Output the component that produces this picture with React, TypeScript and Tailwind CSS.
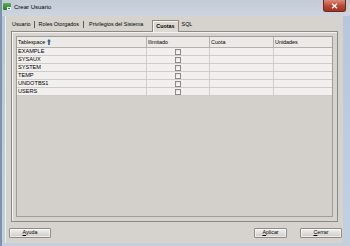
import React from "react";

const rows = ["EXAMPLE", "SYSAUX", "SYSTEM", "TEMP", "UNDOTBS1", "USERS"];

function Btn({ label, w }: { label: string; w: string }) {
  return (
    <div
      className={`${w} h-[10px] flex items-center justify-center rounded-[1px] border border-[#8f8c88] bg-gradient-to-b from-[#f2f1ef] to-[#cfccc7] text-[5.3px] text-black shadow-[inset_0_0_0_1px_rgba(255,255,255,0.6)]`}
    >
      <span>
        <span className="underline">{label[0]}</span>
        {label.slice(1)}
      </span>
    </div>
  );
}

export default function App() {
  return (
    <div
      className="w-[350px] h-[246px] flex flex-col bg-gradient-to-b from-[#b7c6d8] to-[#c3d0de] overflow-hidden border-l-2 border-[#7e93ae]"
      style={{ fontFamily: '"Liberation Sans", Arial, sans-serif' }}
    >
      {/* Title bar */}
      <div className="h-[16px] flex items-start bg-gradient-to-b from-[#c3ccd6] to-[#ccd5de]">
        <div className="ml-[1px] mt-[3px] w-[8px] h-[7px] rounded-[1px] bg-gradient-to-b from-[#58b447] to-[#2e7d2a] flex items-end justify-end">
          <div className="w-[4px] h-[3px] bg-[#3c6fb0] border border-[#e8f0f8]" />
        </div>
        <div className="ml-[3px] mt-[3px] text-[6px] leading-[8px] text-black">Crear Usuario</div>
        <div className="ml-auto mr-[4px] w-[23px] h-[12px] rounded-b-[3px] bg-gradient-to-b from-[#d98a7c] via-[#c24a34] to-[#a8301c] border border-[#6b2a20] border-t-0 flex items-center justify-center">
          <svg width="7" height="6" viewBox="0 0 7 6">
            <path d="M1 0.8 L6 5.2 M6 0.8 L1 5.2" stroke="#ffffff" strokeWidth="1.4" />
          </svg>
        </div>
      </div>

      {/* Body */}
      <div className="ml-[3px] mr-[7px] h-[227px] flex flex-col bg-[#d6d3ce] border-l border-[#eeeeee]">
        {/* Tabs */}
        <div className="h-[15px] flex items-end pl-[3px] text-[5.4px] text-black">
          <div className="px-[3px] h-[12px] flex items-center mb-[1px]">Usuario</div>
          <div className="w-px h-[7px] bg-[#5e5c58] mb-[3px]" />
          <div className="px-[4px] h-[12px] flex items-center mb-[1px]">Roles Otorgados</div>
          <div className="w-px h-[7px] bg-[#5e5c58] mb-[3px]" />
          <div className="px-[5px] h-[12px] flex items-center mb-[1px]">Privilegios del Sistema</div>
          <div className="ml-[4px] px-[3px] h-[12px] flex items-center font-bold border border-b-0 border-[#8c8985] rounded-t-[1px] bg-[#dcd9d4] relative top-px shadow-[inset_1px_1px_0_#f6f5f3]">
            Cuotas
          </div>
          <div className="px-[3px] h-[12px] flex items-center mb-[1px]">SQL</div>
        </div>

        {/* Tab panel */}
        <div className="mx-[5px] h-[191px] border border-[#8c8985] shadow-[inset_1px_1px_0_#f4f3f1] p-[4px] bg-[#d6d3ce]">
          <div className="h-full flex flex-col border border-[#a09d98] bg-[#d3d0cb]">
            <div className="grid grid-cols-[130px_63px_64px_1fr] text-[5.4px] text-black">
              {/* header */}
              <div className="h-[11px] flex items-center pl-[1px] bg-[#eceae7] border-b border-r border-[#b5b2ad]">
                <span>Tablespace</span>
                <svg className="ml-[2px]" width="4" height="6" viewBox="0 0 4 6">
                  <path d="M2 0 L4 2.4 L2.8 2.4 L2.8 6 L1.2 6 L1.2 2.4 L0 2.4 Z" fill="#2f5f9e" />
                </svg>
              </div>
              <div className="h-[11px] flex items-center pl-[1px] bg-[#eceae7] border-b border-r border-[#b5b2ad]">Ilimitado</div>
              <div className="h-[11px] flex items-center pl-[1px] bg-[#eceae7] border-b border-r border-[#b5b2ad]">Cuota</div>
              <div className="h-[11px] flex items-center pl-[1px] bg-[#eceae7] border-b border-[#b5b2ad]">Unidades</div>
              {rows.map((r) => (
                <React.Fragment key={r}>
                  <div className="h-[8px] flex items-center pl-[1px] bg-[#f1f0ee] border-b border-r border-[#cfccc8] text-[5.6px]">{r}</div>
                  <div className="h-[8px] flex items-center justify-center bg-[#f1f0ee] border-b border-r border-[#cfccc8]">
                    <div className="w-[6px] h-[6px] border border-[#8d8a86] bg-gradient-to-b from-[#e6e4e1] to-[#fbfbfa]" />
                  </div>
                  <div className="h-[8px] bg-[#f1f0ee] border-b border-r border-[#cfccc8]" />
                  <div className="h-[8px] bg-[#f1f0ee] border-b border-[#cfccc8]" />
                </React.Fragment>
              ))}
            </div>
          </div>
        </div>

        {/* Buttons */}
        <div className="mt-[6px] flex items-start pl-[3px] pr-[1px]">
          <Btn label="Ayuda" w="w-[42px]" />
          <div className="ml-auto" />
          <Btn label="Aplicar" w="w-[33px]" />
          <div className="ml-[13px]" />
          <Btn label="Cerrar" w="w-[42px]" />
        </div>
      </div>
    </div>
  );
}
